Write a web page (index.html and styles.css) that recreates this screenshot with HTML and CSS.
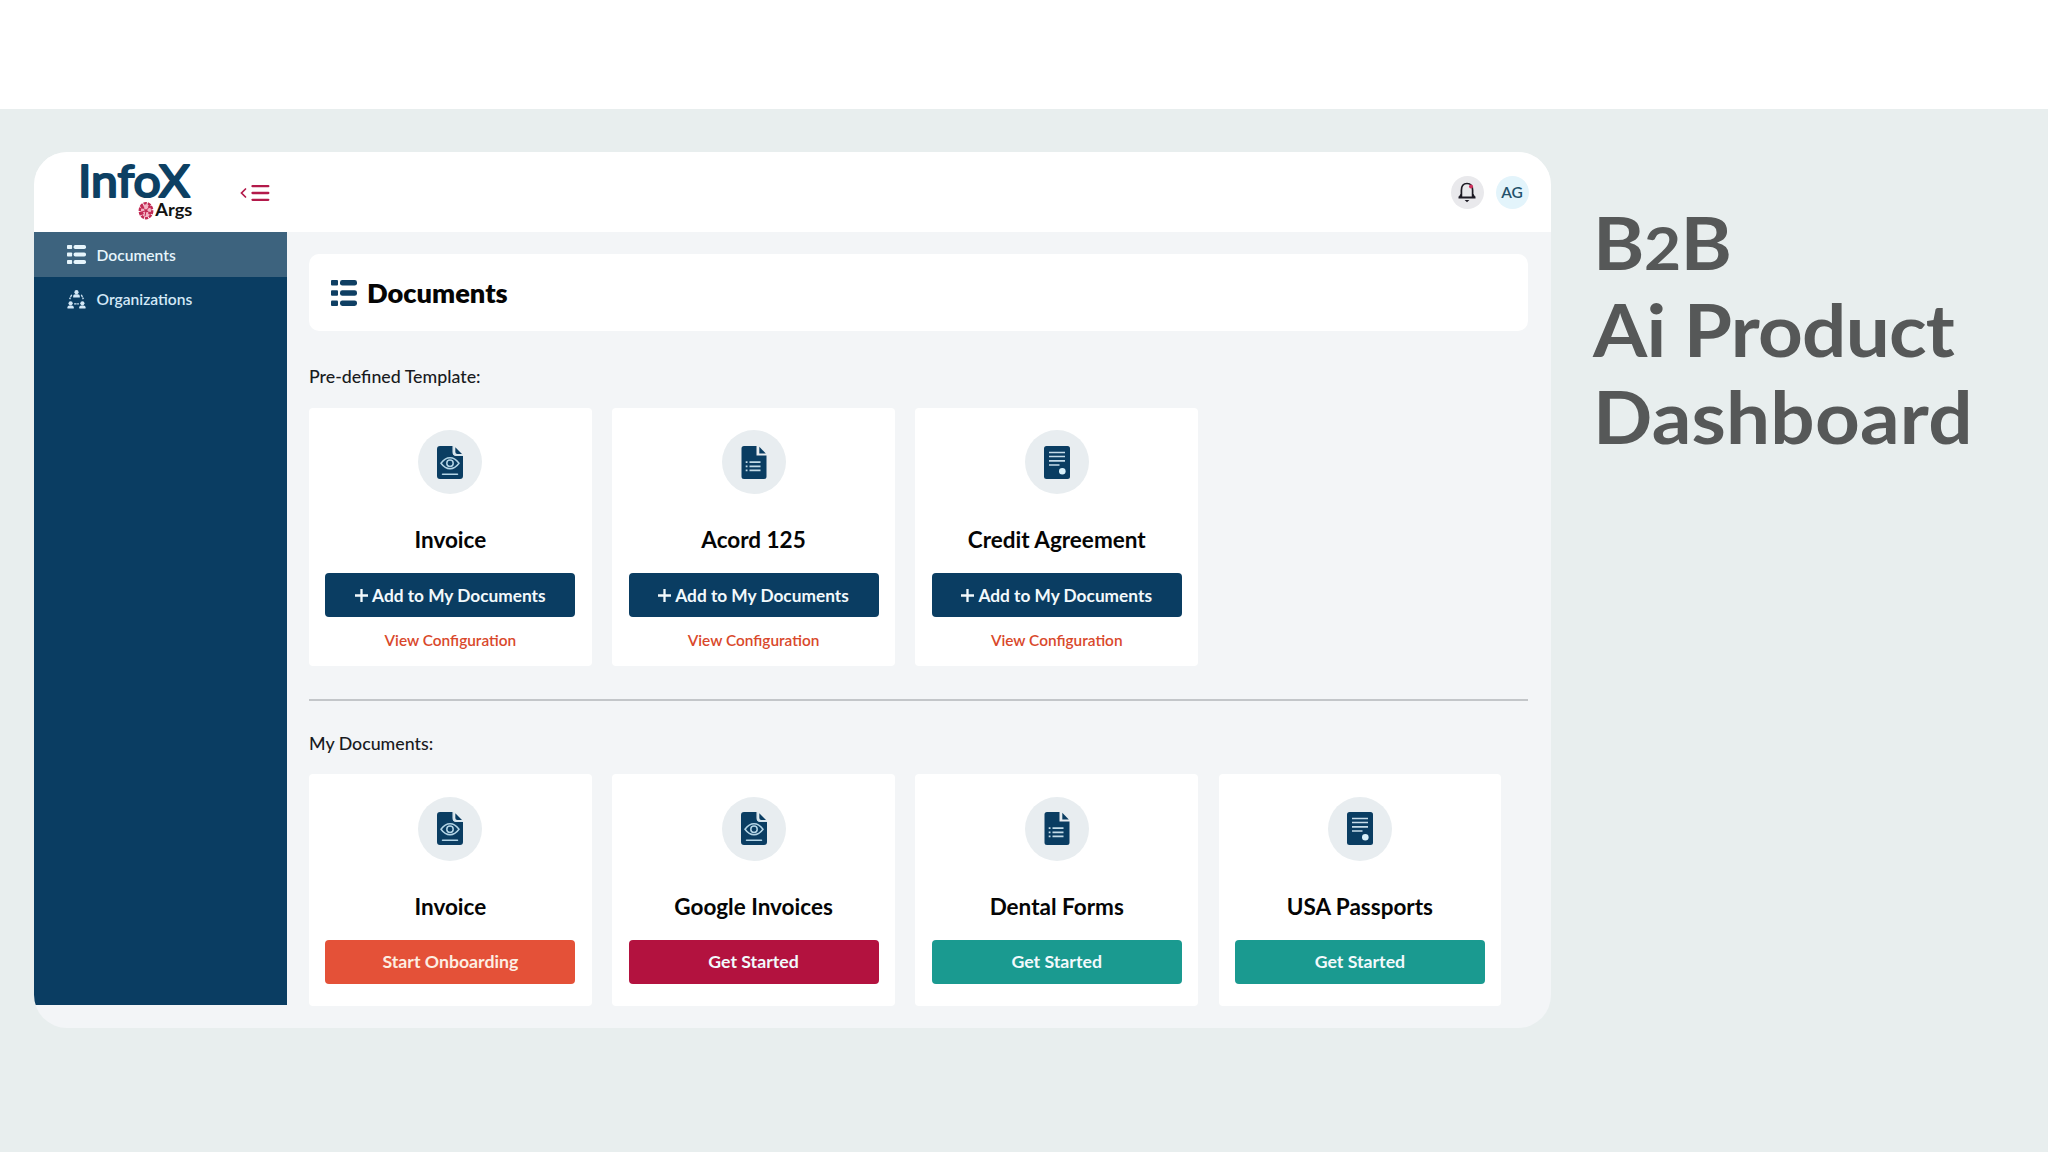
FILE: index.html
```html
<!DOCTYPE html>
<html lang="en">
<head>
<meta charset="utf-8">
<title>InfoX Documents</title>
<link rel="stylesheet" href="styles.css">
</head>
<body>
<svg class="defs" aria-hidden="true">
  <symbol id="list" viewBox="0 0 26 26">
    <g fill="currentColor"><rect width="7" height="5.6" rx="1"/><rect y="10.2" width="7" height="5.6" rx="1"/><rect y="20.4" width="7" height="5.6" rx="1"/><rect x="9" width="17" height="5.6" rx="2.4"/><rect x="9" y="10.2" width="17" height="5.6" rx="2.4"/><rect x="9" y="20.4" width="17" height="5.6" rx="2.4"/></g>
  </symbol>
  <symbol id="org" viewBox="0 0 19 20">
    <g fill="currentColor"><circle cx="9.5" cy="2.3" r="2.2"/><path d="M6 8V6.4q0-1.9 2.200-1.900h2.600q2.200 0 2.200 1.900V8z"/><circle cx="3.3" cy="14" r="2.2"/><path d="M0 19.5v-1.4q0-1.8 2-1.8h2.600q2 0 2 1.800v1.400z"/><circle cx="15.700" cy="14" r="2.200"/><path d="M12.400 19.500v-1.400q0-1.800 2-1.800h2.600q2 0 2 1.800v1.400z"/></g>
    <path d="M4.400 5 2.300 9.600M14.600 5l2.100 4.600M7 14.600h5" stroke="currentColor" stroke-width="1.400" stroke-dasharray="2.600 .6" fill="none"/>
  </symbol>
  <symbol id="invoice" viewBox="0 0 26 33">
    <path d="M3 0h12.500v6q0 4 4 4H26v20q0 3-3 3H3q-3 0-3-3V3Q0 0 3 0z" fill="#0a3d62"/>
    <path d="M18.300 1.300 25 8h-4.700q-2 0-2-2z" fill="#0a3d62"/>
    <path d="M16.700.300V6.500q0 2.700 2.700 2.700H25.600" fill="none" stroke="#cfe2ec" stroke-width="1.200"/>
    <g fill="none" stroke="#b4d5e6" stroke-width="1.500"><path d="M4 17.300Q8 11.800 13 11.800t9 5.500q-4 5.500-9 5.500t-9-5.500z"/><circle cx="13" cy="17.300" r="3.200"/><path d="M5.500 28.300h15" stroke-linecap="round"/></g>
  </symbol>
  <symbol id="form" viewBox="0 0 25 33">
    <path d="M2.500 0H15v9.500h10v21q0 2.500-2.500 2.500h-20Q0 33 0 30.500v-28Q0 0 2.500 0z" fill="#0a3d62"/>
    <path d="M17.800.800 24.300 7.600h-6.500z" fill="#0a3d62"/>
    <g stroke="#c3dbe7" stroke-width="1.800"><path d="M8 16.200h11M8 20.300h11M8 24.400h11"/><path d="M4.200 16.200H6M4.200 20.300H6M4.200 24.400H6"/></g>
  </symbol>
  <symbol id="cert" viewBox="0 0 26 33">
    <rect width="26" height="33" rx="2.500" fill="#0a3d62"/>
    <path d="M5 6.500h16M5 10.500h16M5 14.800h16M5 19h10.500" stroke="#c6dce9" stroke-width="1.700"/>
    <circle cx="18.300" cy="25.300" r="3.300" fill="#d8f0fa"/>
  </symbol>
  <symbol id="plus" viewBox="0 0 13 13"><path d="M6.500 0v13M0 6.500h13" stroke="currentColor" stroke-width="2.300"/></symbol>
</svg>

<main class="stage">
  <section class="window">
    <header class="topbar">
      <svg class="logo" viewBox="0 0 120 64" role="img" aria-label="InfoX Args">
        <text class="logo-name" x="-2" y="37" textLength="112" lengthAdjust="spacingAndGlyphs">InfoX</text>
        <circle cx="66" cy="50.700" r="6.300" fill="#f3b3c4"/>
        <ellipse cx="66" cy="50.700" rx="6.200" ry="7.500" fill="none" stroke="#c22a55" stroke-width="2.400" stroke-dasharray="3.300 .9"/>
        <path d="m66 50.700-3.500-3.500M66 50.700l3.500-4M66 50.700l-5 1.500M66 50.700l4.500 2.500M66 50.700l-1 5.500" stroke="#c22a55" stroke-width="1"/>
        <g fill="#c22a55"><circle cx="62.500" cy="47.200" r="1.500"/><circle cx="69.500" cy="46.700" r="1.400"/><circle cx="66" cy="50.700" r="1.500"/><circle cx="62" cy="53.200" r="1.500"/><circle cx="69.800" cy="53.200" r="1.400"/></g>
        <text class="logo-sub" x="75.300" y="55.500" textLength="37" lengthAdjust="spacingAndGlyphs">Args</text>
      </svg>
      <svg class="collapse" viewBox="0 0 30 18" fill="none" stroke="#b3194a" stroke-linecap="round">
        <path d="M5.500 5 1.500 9l4 4" stroke-width="1.700"/><path d="M12.500 2.200h15.800M12.500 9h15.800M12.500 15.800h15.800" stroke-width="2.300"/>
      </svg>
      <div class="actions">
        <span class="round bell"><svg viewBox="0 0 18 21" fill="none" stroke="#1d1b24" stroke-width="1.700"><path d="M3.400 15V8.200Q3.400 1.500 9 1.500t5.600 6.700V15"/><path d="M.5 15.500h17" stroke-width="2"/><path d="M3.200 12.500 1.500 15.500M14.800 12.500l1.700 3"/><path d="M6.600 18h4.800L9 20.300z" fill="#1d1b24" stroke="none"/><circle cx="13" cy="4.500" r="2" fill="#d0315d" stroke="none"/></svg></span>
        <span class="round avatar">AG</span>
      </div>
    </header>
    <div class="body">
      <nav class="sidebar">
        <a class="nav-item active"><svg><use href="#list"/></svg>Documents</a>
        <a class="nav-item"><svg><use href="#org"/></svg>Organizations</a>
      </nav>
      <div class="content">
        <div class="page-title"><svg><use href="#list"/></svg><h1>Documents</h1></div>
        <h2 class="label">Pre-defined Template:</h2>
        <div class="cards templates">
          <article class="card"><span class="badge"><svg><use href="#invoice"/></svg></span><h3>Invoice</h3><button class="btn add"><svg><use href="#plus"/></svg>Add to My Documents</button><a class="view">View Configuration</a></article>
          <article class="card"><span class="badge"><svg><use href="#form"/></svg></span><h3>Acord 125</h3><button class="btn add"><svg><use href="#plus"/></svg>Add to My Documents</button><a class="view">View Configuration</a></article>
          <article class="card"><span class="badge"><svg><use href="#cert"/></svg></span><h3>Credit Agreement</h3><button class="btn add"><svg><use href="#plus"/></svg>Add to My Documents</button><a class="view">View Configuration</a></article>
        </div>
        <hr>
        <h2 class="label mine">My Documents:</h2>
        <div class="cards documents">
          <article class="card"><span class="badge"><svg><use href="#invoice"/></svg></span><h3>Invoice</h3><button class="btn orange">Start Onboarding</button></article>
          <article class="card"><span class="badge"><svg><use href="#invoice"/></svg></span><h3>Google Invoices</h3><button class="btn crimson">Get Started</button></article>
          <article class="card"><span class="badge"><svg><use href="#form"/></svg></span><h3>Dental Forms</h3><button class="btn teal">Get Started</button></article>
          <article class="card"><span class="badge"><svg><use href="#cert"/></svg></span><h3>USA Passports</h3><button class="btn teal">Get Started</button></article>
        </div>
      </div>
    </div>
  </section>
  <p class="headline"><span class="tag">B<span class="oldstyle">2</span>B</span><br><span class="product">Ai Product</span><br>Dashboard</p>
</main>
</body>
</html>
```
FILE: styles.css
```css
* { box-sizing: border-box; }
body { margin: 0; padding-top: 109px; height: 1152px; overflow: hidden; background: #fff; font-family: Lato, "Liberation Sans", sans-serif; }
h1, h2, h3, p { margin: 0; }
.defs { display: none; }

.stage { display: flex; align-items: flex-start; height: 1043px; padding: 43px 0 0 34px; background: #e8eeee; }

.window { flex: none; width: 1516.500px; height: 876px; border-radius: 33px; overflow: hidden; background: #f3f5f7; }
.topbar { display: flex; align-items: center; height: 80px; padding: 0 22px 0 46px; background: #fff; }
.logo { width: 120px; height: 64px; overflow: visible; }
.logo-name { font: 400 44.500px Lato, sans-serif; fill: #0d4063; stroke: #0d4063; stroke-width: 2.200px; stroke-linejoin: round; }
.logo-sub { font: 700 16.500px Lato, sans-serif; fill: #111; }
.collapse { width: 30px; height: 18px; margin: 2px 0 0 40px; }
.actions { display: flex; gap: 12px; margin-left: auto; }
.round { display: flex; align-items: center; justify-content: center; width: 33px; height: 33px; border-radius: 50%; }
.bell { background: #e9e9ec; }
.bell svg { width: 18px; height: 21px; }
.avatar { background: #e3f4fb; color: #23516b; font-size: 15.500px; font-weight: 600; }

.body { display: flex; align-items: flex-start; }
.sidebar { flex: none; width: 253px; height: 773px; background: #0a3d62; }
.nav-item { display: flex; align-items: center; gap: 11px; height: 44.500px; padding: 1px 0 0 32.500px; color: #d3e8f7; font-size: 15.600px; font-weight: 600; line-height: 20px; }
.nav-item svg { width: 19px; height: 19px; }
.nav-item.active { background: #3d637e; color: #e6f5fc; }

.content { flex: 1; padding: 22px 22.500px 0 22px; }
.page-title { display: flex; align-items: center; gap: 10px; height: 77px; padding-left: 22px; border-radius: 10px; background: #fff; }
.page-title svg { width: 26px; height: 26px; color: #0f3f63; }
.page-title h1 { font-size: 27.200px; font-weight: 800; line-height: 34px; color: #050505; }
.label { margin: 34px 0 21px; font-size: 17.800px; font-weight: 500; line-height: 22px; color: #191b1e; }
.label.mine { margin: 31px 0 20px; }
.cards { display: flex; gap: 20.500px; }
.card { display: flex; flex-direction: column; align-items: center; width: 282.700px; height: 258px; padding: 22px 16px 0; border-radius: 4px; background: #fff; }
.documents .card { height: 232px; padding-top: 22.600px; }
.badge { display: flex; align-items: center; justify-content: center; width: 64px; height: 64px; border-radius: 50%; background: #e8edf0; }
.badge svg { width: 26px; height: 33px; }
.card h3 { margin: 32px 0 19px; font-size: 22.500px; font-weight: 700; line-height: 28px; color: #050505; }
.btn { display: flex; align-items: center; justify-content: center; gap: 4px; width: 250px; height: 44px; padding: 0; border: 0; border-radius: 4px; color: #f2f9fc; font: 700 17.700px Lato, sans-serif; }
.btn svg { width: 13px; height: 13px; }
.add { background: #0a3d62; font-size: 17.300px; }
.orange { background: #e45138; color: #fdeee2; }
.crimson { background: #b3123f; }
.teal { background: #1a9a90; }
.view { margin-top: 13px; font-size: 15.400px; font-weight: 600; line-height: 20px; color: #d9482b; }
hr { height: 2px; margin: 33px 0 0; border: 0; background: #c3c6c9; }

.headline { margin: 47px 0 0 42px; font: 700 72px/86.800px Lato, sans-serif; letter-spacing: .2px; color: #565858; white-space: nowrap; transform: scaleX(1.085); transform-origin: 0 0; }
.product { letter-spacing: -.700px; }
.tag { letter-spacing: -.500px; }
.oldstyle { font-size: 59px; line-height: 1; }
```
